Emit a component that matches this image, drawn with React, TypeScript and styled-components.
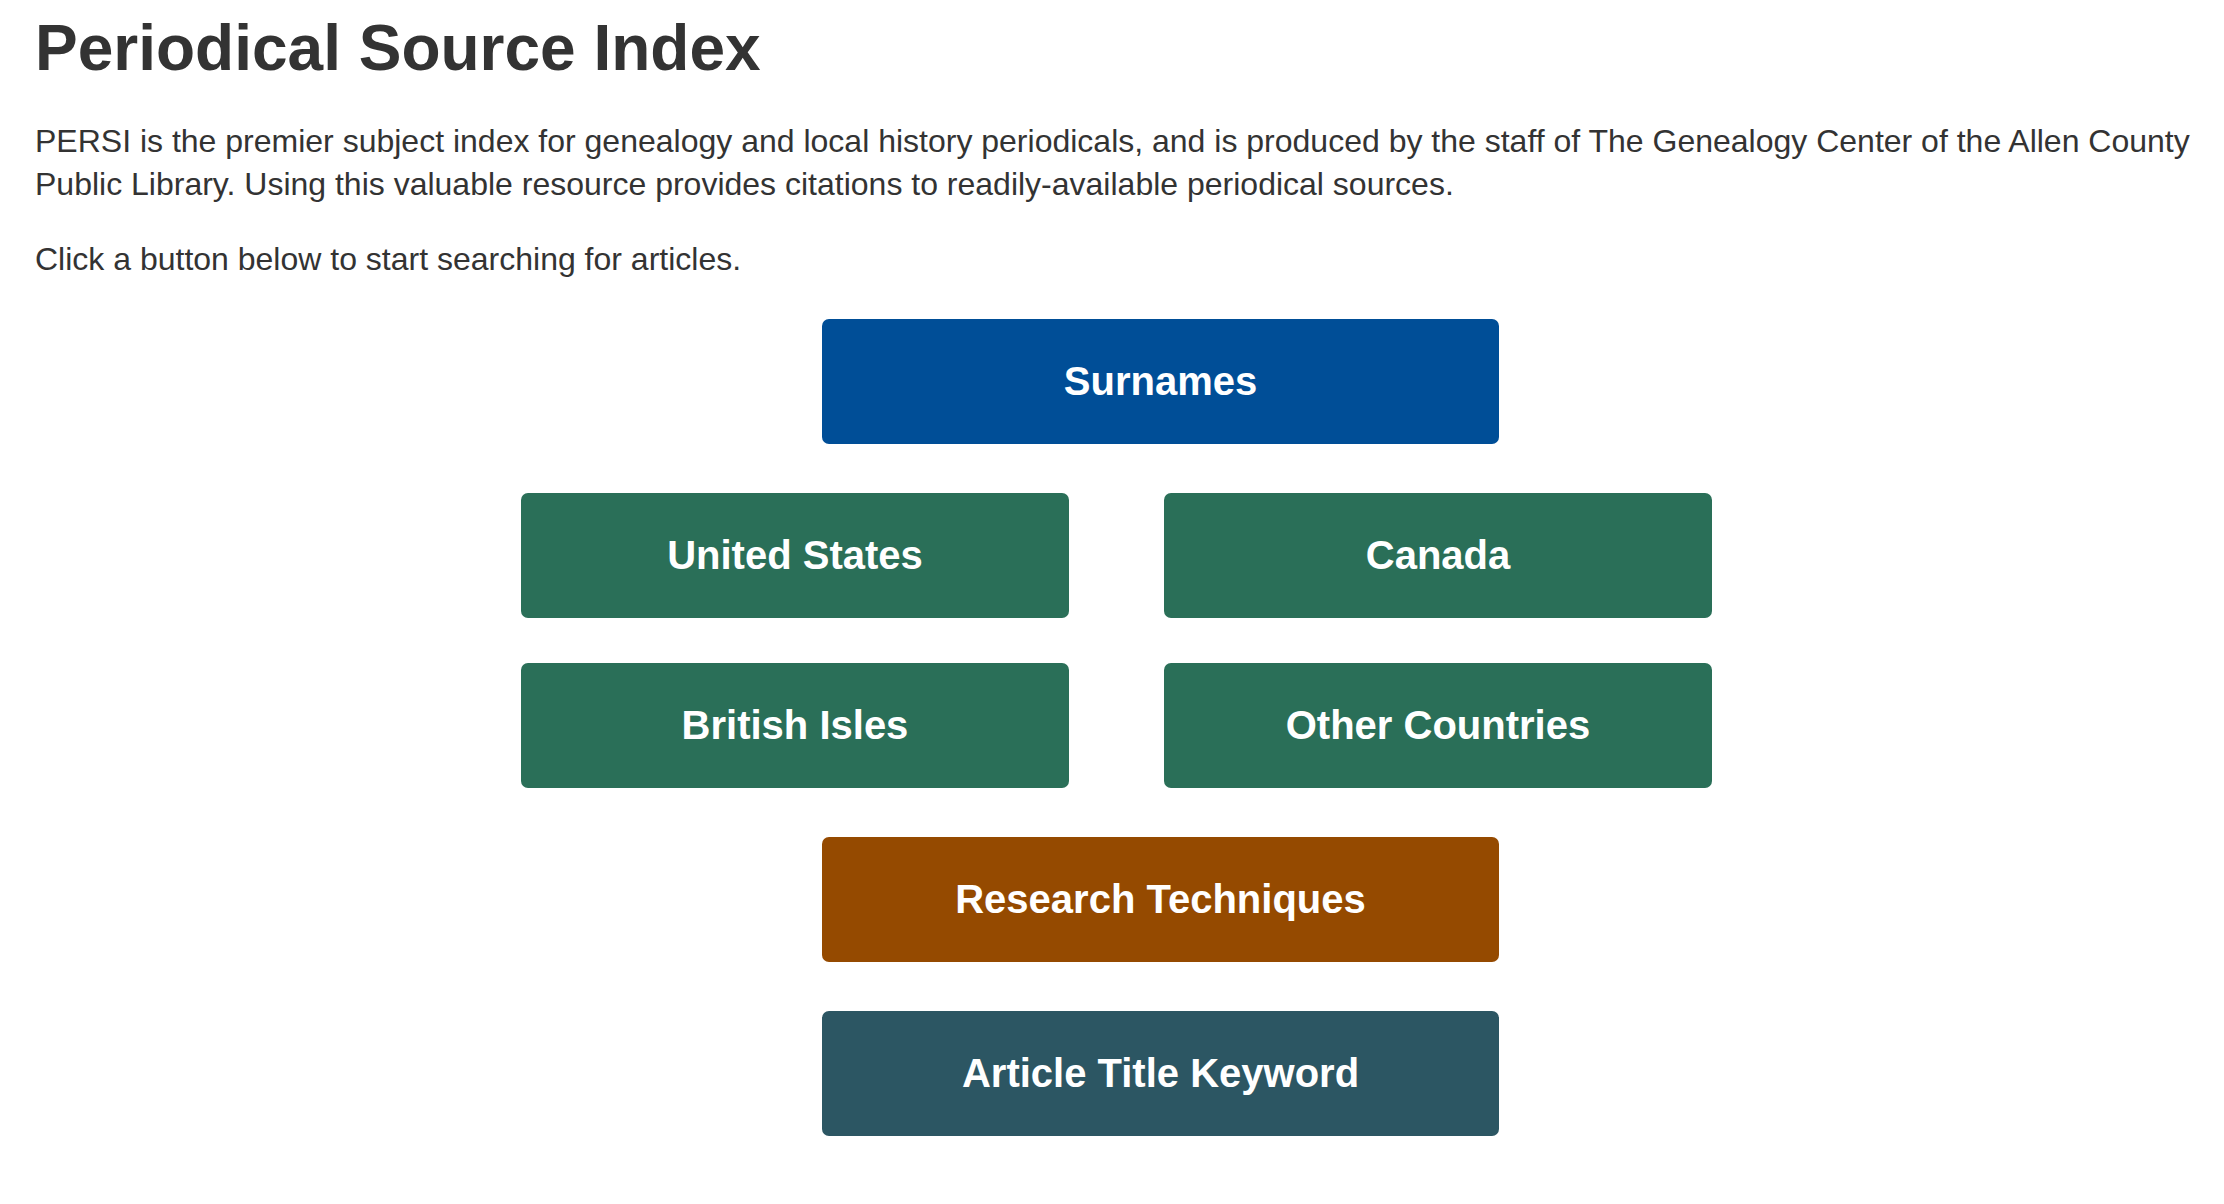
import styled, { createGlobalStyle } from 'styled-components';

const GlobalStyle = createGlobalStyle`
  html, body {
    margin: 0;
    padding: 0;
    background: #ffffff;
  }
  body {
    font-family: "Liberation Sans", Arial, Helvetica, sans-serif;
    color: #333333;
  }
`;

type Tone = 'blue' | 'green' | 'brown' | 'slate';

const tones: Record<Tone, string> = {
  blue: '#004e97',
  green: '#2a6f58',
  brown: '#954a00',
  slate: '#2c5663'
};

const countries = ['United States', 'Canada', 'British Isles', 'Other Countries'];

export default function App() {
  return (
    <>
      <GlobalStyle />
      <Page>
        <Title>Periodical Source Index</Title>
        <Intro>
          PERSI is the premier subject index for genealogy and local history periodicals, and is produced by the staff
          of The Genealogy Center of the Allen County Public Library. Using this valuable resource provides citations to
          readily-available periodical sources.
        </Intro>
        <Lead>Click a button below to start searching for articles.</Lead>
        <ButtonStack>
          <SoloRow>
            <SearchButton $tone="blue" $wide>
              Surnames
            </SearchButton>
          </SoloRow>
          <CountryGrid>
            {countries.map((name) => (
              <SearchButton key={name} $tone="green">
                {name}
              </SearchButton>
            ))}
          </CountryGrid>
          <SoloRow>
            <SearchButton $tone="brown" $wide>
              Research Techniques
            </SearchButton>
          </SoloRow>
          <SoloRow>
            <SearchButton $tone="slate" $wide>
              Article Title Keyword
            </SearchButton>
          </SoloRow>
        </ButtonStack>
      </Page>
    </>
  );
}

const Page = styled.main`
  padding: 11px 26px 40px 35px;
`;

const Title = styled.h1`
  margin: 0 0 35px;
  font-size: 64px;
  line-height: normal;
  font-weight: 700;
  color: #333333;
`;

const Intro = styled.p`
  margin: 0 0 32px;
  font-size: 32px;
  line-height: 43px;
`;

const Lead = styled(Intro)`
  margin-bottom: 38px;
`;

const ButtonStack = styled.div`
  width: 1191px;
  margin: 0 auto;
  display: flex;
  flex-direction: column;
  gap: 49px;
`;

const SoloRow = styled.div`
  display: flex;
  justify-content: center;
  padding-left: 88px;
`;

const CountryGrid = styled.div`
  display: grid;
  grid-template-columns: 548px 548px;
  column-gap: 95px;
  row-gap: 45px;
`;

const SearchButton = styled.button<{ $tone: Tone; $wide?: boolean }>`
  width: ${(p) => (p.$wide ? '677px' : '548px')};
  height: 125px;
  border: none;
  border-radius: 7px;
  background: ${(p) => tones[p.$tone]};
  color: #ffffff;
  font-family: "Liberation Sans", Arial, Helvetica, sans-serif;
  font-size: 40px;
  font-weight: 700;
  cursor: pointer;
  display: flex;
  align-items: center;
  justify-content: center;
  padding: 0;
`;
